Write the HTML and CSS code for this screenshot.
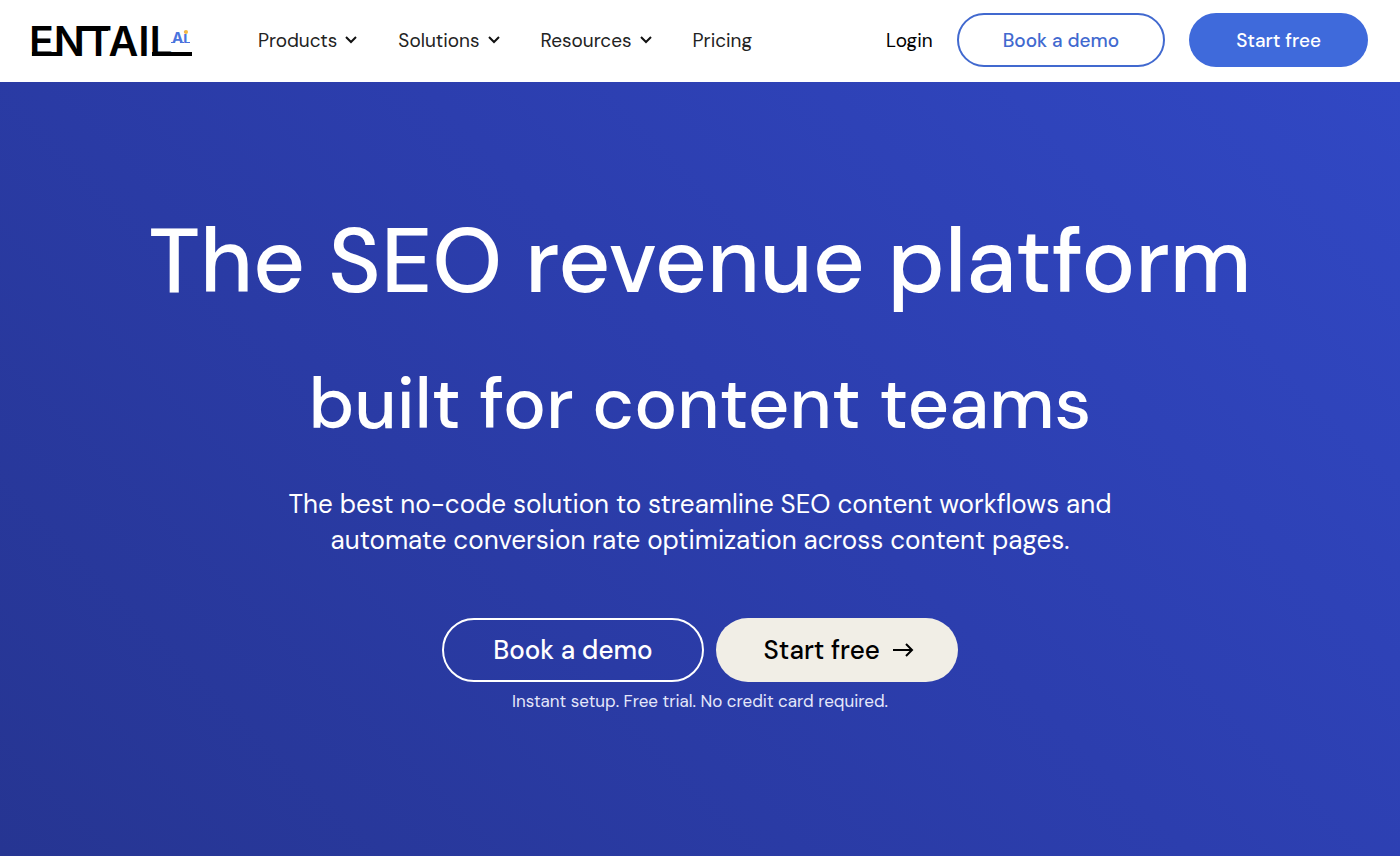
FILE: index.html
```html
<!DOCTYPE html>
<html lang="en">
<head>
    <meta charset="UTF-8">
    <meta name="viewport" content="width=device-width, initial-scale=1.0">
    <title>Entail AI | The SEO revenue platform</title>
    <link rel="stylesheet" href="styles.css">
</head>
<body>
    <header class="site-header">
        <a class="logo" href="#" aria-label="Entail AI">
            <svg width="166" height="60" viewBox="-4 -17 166 60">
                <text class="logo-name" x="-3" y="29">ENTAIL</text>
                <path d="M0 25h29v4H0zM46 -1h30v5H46zM120 25h40v4h-40z"/>
                <text class="logo-ai" x="140" y="16">Ai</text>
                <path class="logo-line" d="M139 15h4v1h-4zM148 15h4v1h-4zM153 15h5v1h-5z"/>
                <circle class="logo-dot" cx="154" cy="5" r="2"/>
            </svg>
        </a>
        <nav class="main-nav">
            <button class="nav-item" type="button">Products
                <svg width="12" height="8" viewBox="0 0 12 8"><path d="M1 1l5 5 5-5"/></svg>
            </button>
            <button class="nav-item" type="button">Solutions
                <svg width="12" height="8" viewBox="0 0 12 8"><path d="M1 1l5 5 5-5"/></svg>
            </button>
            <button class="nav-item" type="button">Resources
                <svg width="12" height="8" viewBox="0 0 12 8"><path d="M1 1l5 5 5-5"/></svg>
            </button>
            <a class="nav-item" href="#">Pricing</a>
        </nav>
        <div class="header-actions">
            <a class="login" href="#">Login</a>
            <a class="btn btn-outline" href="#">Book a demo</a>
            <a class="btn btn-primary" href="#">Start free</a>
        </div>
    </header>

    <main class="hero">
        <h1>The SEO revenue platform</h1>
        <h2>built for content teams</h2>
        <p class="hero-text">The best no-code solution to streamline SEO content workflows and<br>automate conversion rate optimization across content pages.</p>
        <div class="hero-buttons">
            <a class="btn btn-large btn-white-outline" href="#">Book a demo</a>
            <a class="btn btn-large btn-cream" href="#">Start free
                <svg width="22" height="16" viewBox="0 0 22 16"><path d="M1 8h19M14 2l6 6-6 6"/></svg>
            </a>
        </div>
        <p class="hero-note">Instant setup. Free trial. No credit card required.</p>
    </main>
</body>
</html>
```
FILE: styles.css
```css
* {
    box-sizing: border-box;
}
body {
    margin: 0;
    min-height: 100vh;
    display: flex;
    flex-direction: column;
    font-family: "DM Sans", Inter, sans-serif;
    color: #111;
    background-color: #fff;
}
a {
    color: inherit;
    text-decoration: none;
}
.site-header {
    display: flex;
    align-items: center;
    height: 82px;
    padding: 0 32px 2px 28px;
}
.logo {
    display: flex;
    margin-right: 64px;
}
.logo-name {
    font-family: Inter, sans-serif;
    font-size: 41px;
    font-weight: 600;
}
.logo-ai {
    font-family: Inter, sans-serif;
    font-size: 15px;
    font-weight: 700;
    fill: #4a74de;
}
.logo-line {
    fill: #4a74de;
}
.logo-dot {
    fill: #f5b940;
}
.main-nav {
    display: flex;
    align-items: center;
    gap: 41px;
}
.nav-item {
    display: flex;
    align-items: center;
    gap: 8px;
    padding: 0;
    border: none;
    background: none;
    color: #222;
    font-family: inherit;
    font-size: 19px;
    line-height: 27px;
    cursor: pointer;
}
.nav-item svg {
    fill: none;
    stroke: #111;
    stroke-width: 2;
}
.header-actions {
    display: flex;
    align-items: center;
    gap: 24px;
    margin-left: auto;
}
.login {
    color: #000;
    font-size: 19px;
    line-height: 27px;
}
.btn {
    display: flex;
    align-items: center;
    justify-content: center;
    height: 54px;
    padding: 0 44px;
    border: 2px solid transparent;
    border-radius: 32px;
    font-size: 19px;
    font-weight: 500;
}
.btn-outline {
    border-color: #4169cf;
    color: #4169cf;
}
.btn-primary {
    padding: 0 45px;
    background-color: #3f6adb;
    color: #fff;
}
.hero {
    flex: 1;
    display: flex;
    flex-direction: column;
    align-items: center;
    margin-bottom: 1px;
    padding-top: 125px;
    background: linear-gradient(45deg, #263592, #2c3eae 55%, #3148c4);
    color: #fff;
    text-align: center;
}
h1, h2 {
    margin: 0;
    font-weight: 500;
}
h1 {
    font-size: 90px;
    line-height: 110px;
}
h2 {
    margin-top: 39px;
    font-size: 72px;
    line-height: 96px;
}
.hero-text {
    margin: 34px 0 60px;
    font-size: 26px;
    line-height: 36px;
}
.hero-buttons {
    display: flex;
    gap: 12px;
}
.btn-large {
    height: 64px;
    padding: 0 49px;
    font-size: 26px;
}
.btn-large svg {
    margin-left: 12px;
    fill: none;
    stroke: #000;
    stroke-width: 2;
}
.btn-white-outline {
    border-color: #fff;
}
.btn-cream {
    padding: 0 42px 0 46px;
    background-color: #f1eee6;
    color: #000;
}
.hero-note {
    margin: 7px 0 0;
    color: #e4e7fa;
    font-size: 17px;
    line-height: 24px;
}
```
